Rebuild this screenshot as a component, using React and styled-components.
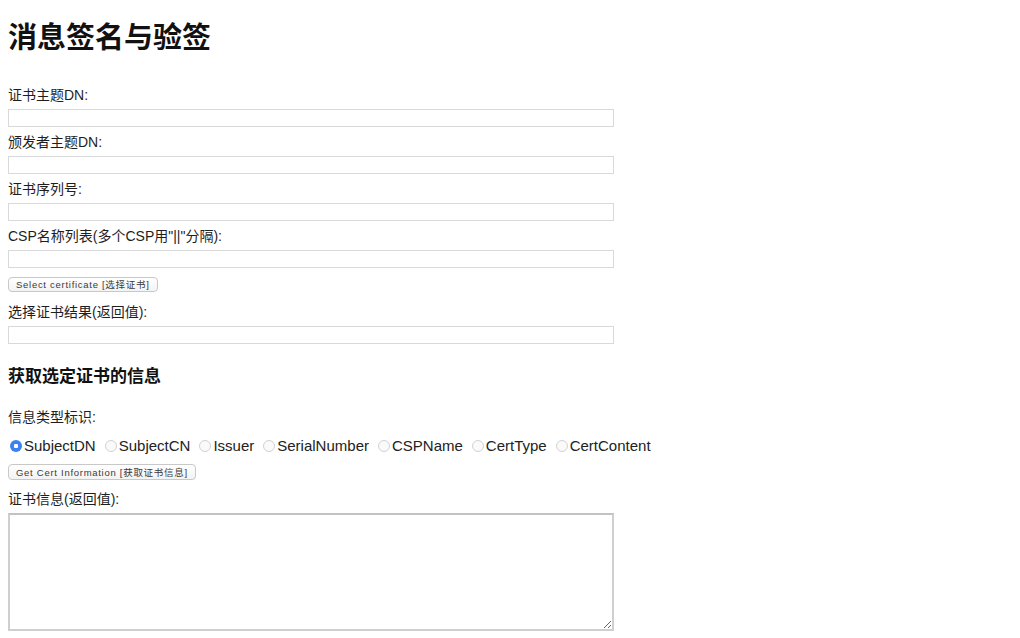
import React, { useState } from "react";
import styled, { createGlobalStyle } from "styled-components";

const GlobalStyle = createGlobalStyle`
  html, body {
    margin: 0;
    padding: 0;
    background: #ffffff;
  }
  body {
    font-family: "Liberation Sans", "Noto Sans CJK SC", sans-serif;
    color: #1e1e1e;
  }
`;

const fields = [
  { label: "证书主题DN:" },
  { label: "颁发者主题DN:" },
  { label: "证书序列号:" },
  { label: "CSP名称列表(多个CSP用\"||\"分隔):" },
];

const infoTypes = [
  "SubjectDN",
  "SubjectCN",
  "Issuer",
  "SerialNumber",
  "CSPName",
  "CertType",
  "CertContent",
];

const App = () => {
  const [selected, setSelected] = useState("SubjectDN");

  return (
    <Page>
      <GlobalStyle />
      <Title>消息签名与验签</Title>

      <Form>
        {fields.map((f) => (
          <Field key={f.label}>
            <Label>{f.label}</Label>
            <TextInput type="text" />
          </Field>
        ))}
        <SmallButton $top={4}>Select certificate [选择证书]</SmallButton>

        <Field $top={10}>
          <Label>选择证书结果(返回值):</Label>
          <TextInput type="text" />
        </Field>
      </Form>

      <SubTitle>获取选定证书的信息</SubTitle>

      <Label>信息类型标识:</Label>
      <RadioRow>
        {infoTypes.map((t) => (
          <RadioItem key={t}>
            <Radio
              type="radio"
              name="infoType"
              checked={selected === t}
              onChange={() => setSelected(t)}
            />
            {t}
          </RadioItem>
        ))}
      </RadioRow>
      <SmallButton $top={8} $height={16}>
        Get Cert Information [获取证书信息]
      </SmallButton>

      <Field $top={9}>
        <Label>证书信息(返回值):</Label>
        <TextArea />
      </Field>
    </Page>
  );
};

const Page = styled.div`
  display: flex;
  flex-direction: column;
  align-items: flex-start;
  padding: 20px 8px 0;
`;

const Title = styled.h1`
  margin: 0 0 29px;
  font-size: 29px;
  line-height: 36px;
  font-weight: 700;
  color: #111;
`;

const Form = styled.div`
  display: flex;
  flex-direction: column;
  align-items: flex-start;
`;

const Field = styled.div`
  display: flex;
  flex-direction: column;
  gap: 4px;
  margin-top: ${(p) => (p.$top !== undefined ? p.$top : 0)}px;
  margin-bottom: 5px;
`;

const Label = styled.div`
  font-size: 14px;
  line-height: 20px;
  color: #1e1e1e;
`;

const TextInput = styled.input`
  box-sizing: border-box;
  width: 606px;
  height: 18px;
  margin: 0;
  padding: 0 3px;
  border: 1px solid #d9d9d9;
  background: #fff;
  outline: none;
`;

const SmallButton = styled.button`
  box-sizing: border-box;
  margin: ${(p) => p.$top}px 0 0;
  height: ${(p) => p.$height || 15}px;
  padding: 0 7px;
  border: 1px solid #c8c8c8;
  border-radius: 4px;
  background: linear-gradient(#ffffff, #f3f3f3);
  font-family: "Liberation Sans", "Noto Sans CJK SC", sans-serif;
  font-size: 9.5px;
  line-height: 13px;
  color: #3a3a3a;
  letter-spacing: 0.72px;
`;

const SubTitle = styled.h3`
  margin: 16px 0 18px;
  font-size: 17px;
  line-height: 24px;
  font-weight: 700;
  color: #111;
`;

const RadioRow = styled.div`
  display: flex;
  align-items: center;
  gap: 7px;
  margin-top: 9px;
  height: 20px;
`;

const RadioItem = styled.label`
  display: flex;
  align-items: center;
  gap: 1px;
  font-size: 15px;
  line-height: 20px;
  color: #222;
`;

const Radio = styled.input`
  appearance: none;
  box-sizing: border-box;
  width: 12px;
  height: 12px;
  margin: 0 1px 0 2px;
  border-radius: 50%;
  border: 1px solid #d2d2d2;
  background: #fafafa;
  &:checked {
    border: none;
    background: radial-gradient(circle, #fff 0 2px, #3c82f0 2.5px);
  }
`;

const TextArea = styled.textarea`
  box-sizing: border-box;
  width: 606px;
  height: 118px;
  margin: 0;
  border: 2px solid #cfcfcf;
  border-top-color: #c2c2c2;
  background: #fff;
  resize: both;
`;

export default App;
